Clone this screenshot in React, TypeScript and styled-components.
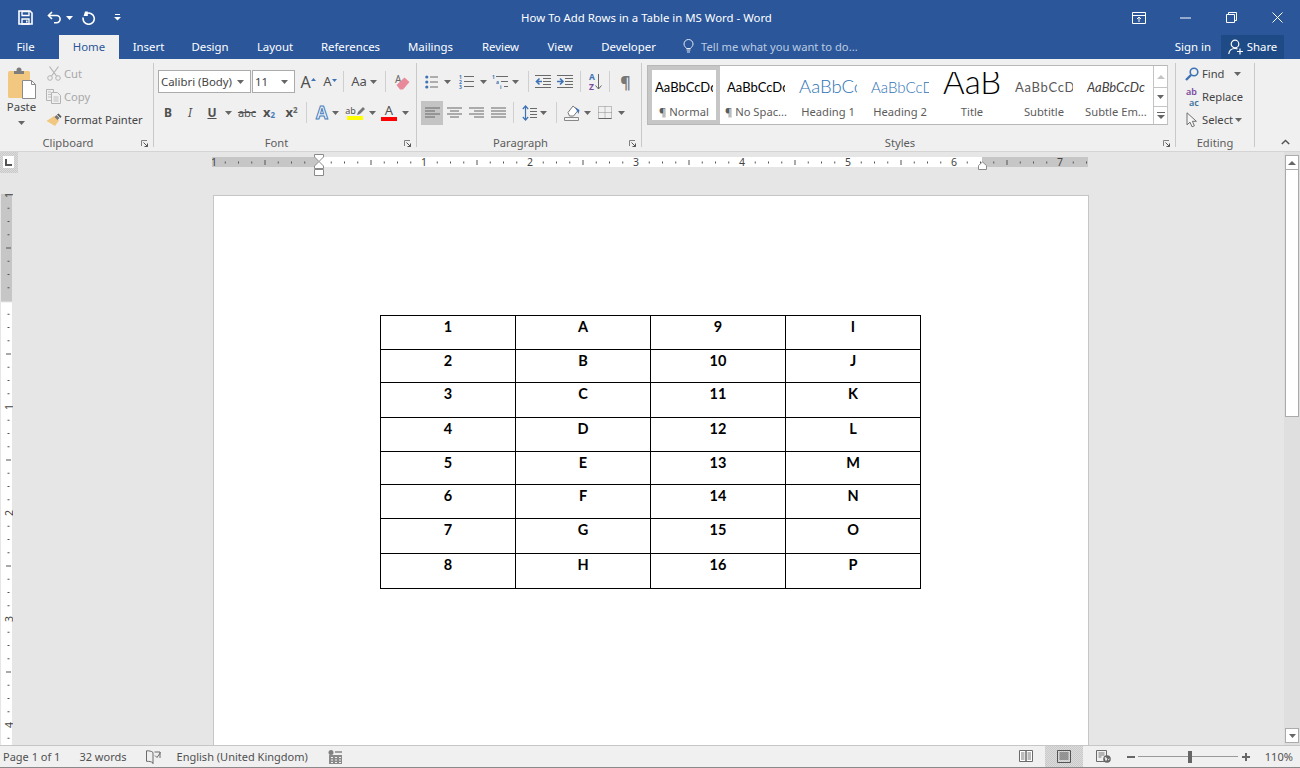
import React from 'react';
import styled, { createGlobalStyle } from 'styled-components';

const UI = '"Noto Sans", "Open Sans", sans-serif';
const BODY = 'Lato, "Liberation Sans", sans-serif';
const BLUE = '#2B579A';
const INK = '#444444';
const DITHER = 'repeating-conic-gradient(#c9c9c9 0 25%, #dcdcdc 0 50%) 0 0 / 2px 2px';

const Global = createGlobalStyle`
  html, body { margin: 0; padding: 0; overflow: hidden; background: #e6e6e6; }
  * { box-sizing: border-box; }
`;

const Window = styled.div`
  width: 1300px;
  height: 768px;
  display: flex;
  flex-direction: column;
  overflow: hidden;
  font-family: ${UI};
  font-size: 11.2px;
  color: ${INK};
`;

/* title bar */
const TitleBar = styled.div`
  height: 35px;
  flex: none;
  background: ${BLUE};
  display: grid;
  grid-template-columns: 178px 1fr 185px;
  align-items: center;
  color: #fff;
`;
const Qat = styled.div`
  display: flex;
  align-items: center;
`;
const DocTitle = styled.div`
  text-align: center;
  font-size: 11.4px;
`;
const WinControls = styled.div`
  display: flex;
`;
const WinBtn = styled.span<{ $w?: number }>`
  width: ${p => p.$w ?? 46}px;
  display: flex;
  align-items: center;
  justify-content: center;
`;

/* tabs */
const TabRow = styled.div`
  height: 24px;
  flex: none;
  background: ${BLUE};
  display: flex;
  align-items: stretch;
  color: #fff;
  font-size: 11.4px;
`;
const Tab = styled.div<{ $w: number; $active?: boolean }>`
  width: ${p => p.$w}px;
  display: flex;
  align-items: center;
  justify-content: center;
  padding-bottom: 2px;
  background: ${p => (p.$active ? '#f0f0f0' : 'transparent')};
  color: ${p => (p.$active ? BLUE : '#fff')};
`;
const TellMe = styled.div`
  margin-left: 13px;
  display: flex;
  align-items: center;
  gap: 7px;
  padding-bottom: 2px;
  color: #bccbe2;
  font-size: 11.2px;
`;
const SignIn = styled.div`
  margin-left: auto;
  display: flex;
  align-items: center;
  margin-right: 10px;
  padding-bottom: 2px;
`;
const ShareBtn = styled.div`
  width: 63px;
  margin-right: 16px;
  padding-bottom: 1px;
  background: #1e4a85;
  display: flex;
  align-items: center;
  justify-content: center;
  gap: 3px;
`;

/* ribbon */
const Ribbon = styled.div`
  height: 93px;
  flex: none;
  background: #f0f0f0;
  border-bottom: 1px solid #d4d4d4;
  display: flex;
  align-items: flex-start;
  padding-top: 4px;
`;
const Group = styled.div<{ $w: number }>`
  width: ${p => p.$w}px;
  height: 84px;
  flex: none;
  display: flex;
  flex-direction: column;
  border-right: 1px solid #c9c9c9;
`;
const GroupBody = styled.div<{ $pt?: number; $row?: boolean }>`
  padding-top: ${p => p.$pt ?? 7}px;
  display: flex;
  flex-direction: ${p => (p.$row ? 'row' : 'column')};
`;
const GroupLabel = styled.div`
  margin-top: auto;
  margin-bottom: -5px;
  height: 20px;
  display: flex;
  align-items: center;
  font-size: 11.2px;
  color: #5c5c5c;
`;
const LabelText = styled.span`
  flex: 1;
  text-align: center;
`;
const Launcher = styled.span`
  display: flex;
  margin: 3px 5px 0;
`;
const ToolRow = styled.div<{ $mt?: number }>`
  display: flex;
  align-items: center;
  height: 23px;
  margin-top: ${p => p.$mt ?? 0}px;
`;
const Tool = styled.span<{ $l?: number; $w?: number; $on?: boolean; $h?: number }>`
  flex: none;
  display: flex;
  align-items: center;
  justify-content: center;
  margin-left: ${p => p.$l ?? 0}px;
  ${p => (p.$w ? `width: ${p.$w}px;` : '')}
  ${p => (p.$h ? `height: ${p.$h}px;` : '')}
  ${p => (p.$on ? 'background: #c4c4c4;' : '')}
`;
const Sep = styled.span<{ $l: number }>`
  flex: none;
  width: 1px;
  height: 21px;
  margin-left: ${p => p.$l}px;
  background: #cfcfcf;
`;
const Combo = styled.div<{ $l: number; $w: number }>`
  margin-left: ${p => p.$l}px;
  width: ${p => p.$w}px;
  height: 23px;
  flex: none;
  background: #fff;
  border: 1px solid #ababab;
  display: flex;
  align-items: center;
  justify-content: space-between;
  padding: 0 6px 0 2px;
  font-size: 11.4px;
`;
const Glyph = styled.span<{ $size?: number; $bold?: boolean; $italic?: boolean; $color?: string }>`
  font-size: ${p => p.$size ?? 12}px;
  font-weight: ${p => (p.$bold ? 700 : 400)};
  font-style: ${p => (p.$italic ? 'italic' : 'normal')};
  color: ${p => p.$color ?? '#505050'};
  line-height: 1;
`;
const Struck = styled(Glyph)`
  text-decoration: line-through;
`;
const Small = styled.span<{ $color?: string }>`
  font-size: 8px;
  font-weight: 700;
  color: ${p => p.$color ?? '#4a7ebb'};
  line-height: 1;
  align-self: ${p => (p.$color ? 'flex-start' : 'flex-end')};
`;
const OutlineA = styled.span`
  font-size: 17px;
  line-height: 1;
  font-weight: 700;
  color: #eaf1fa;
  -webkit-text-stroke: 1px #4a7ebb;
`;
const BarGlyph = styled.span`
  width: 16px;
  display: flex;
  flex-direction: column;
  align-items: center;
`;
const ColorBar = styled.span<{ $color: string }>`
  width: 16px;
  height: 4px;
  background: ${p => p.$color};
  display: block;
`;
const TopMark = styled.span`
  display: flex;
  align-self: flex-start;
  margin-top: 4px;
`;
const PasteCol = styled.div`
  width: 42px;
  flex: none;
  display: flex;
  flex-direction: column;
  align-items: center;
  padding: 4px 0 0 1px;
  font-size: 11.4px;
`;
const PasteLabel = styled.span`
  line-height: 16px;
`;
const Stack = styled.div<{ $l: number }>`
  margin-left: ${p => p.$l}px;
  margin-top: -1px;
`;
const StackIcon = styled.span`
  width: 21px;
  flex: none;
  display: flex;
  align-items: center;
  justify-content: center;
`;
const StackRow = styled.div<{ $off?: boolean }>`
  height: 23px;
  display: flex;
  align-items: center;
  white-space: nowrap;
  color: ${p => (p.$off ? '#a8a8a8' : INK)};
`;
const ReplaceGlyph = styled.span`
  display: flex;
  flex-direction: column;
  align-items: center;
  font-size: 9px;
  font-weight: 600;
  line-height: 11px;
  color: #7a4a9c;
`;
const ReplaceLower = styled.span`
  color: #41719c;
  margin-left: 5px;
`;
const SortGlyph = styled.span`
  display: flex;
  flex-direction: column;
  font-size: 8.5px;
  font-weight: 700;
  line-height: 10px;
  color: #3e74b8;
`;
const SortLower = styled.span`
  color: #7a4a9c;
`;

/* styles gallery */
const Gallery = styled.div`
  margin-left: 5px;
  width: 521px;
  height: 60px;
  background: #fff;
  border: 1px solid #b8b8b8;
  border-right-color: #c4c4c4;
  display: flex;
`;
const StyleItem = styled.div<{ $on?: boolean }>`
  width: 72px;
  flex: none;
  display: flex;
  flex-direction: column;
  align-items: center;
  padding-top: ${p => (p.$on ? 2 : 6)}px;
  border: ${p => (p.$on ? '4px solid #c6c6c6' : 'none')};
`;
const StylePreview = styled.div<{
  $font: number;
  $lh?: number;
  $color?: string;
  $light?: boolean;
  $italic?: boolean;
  $spaced?: boolean;
}>`
  width: 58px;
  height: 24px;
  overflow: hidden;
  white-space: nowrap;
  font-family: ${BODY};
  font-size: ${p => p.$font}px;
  line-height: ${p => p.$lh ?? 30}px;
  font-weight: ${p => (p.$light ? 300 : 400)};
  font-style: ${p => (p.$italic ? 'italic' : 'normal')};
  letter-spacing: ${p => (p.$spaced ? '0.7px' : '0')};
  color: ${p => p.$color ?? '#000'};
`;
const StyleName = styled.div`
  margin-top: 8px;
  line-height: 16px;
  font-size: 11.2px;
  color: #5c5c5c;
  white-space: nowrap;
`;
const GalleryScroll = styled.div`
  margin-left: auto;
  width: 14px;
  display: flex;
  flex-direction: column;
  border-left: 1px solid #c4c4c4;
`;
const ScrollCell = styled.div<{ $h: number; $line?: boolean }>`
  height: ${p => p.$h}px;
  display: flex;
  align-items: center;
  justify-content: center;
  background: ${p => (p.$line ? '#fff' : 'transparent')};
  border-top: ${p => (p.$line ? '1px solid #c4c4c4' : 'none')};
`;
const Collapse = styled.div`
  flex: 1;
  display: flex;
  justify-content: flex-end;
  padding: 76px 10px 0 0;
`;

/* workspace */
const Workspace = styled.div`
  flex: 1;
  min-height: 0;
  display: flex;
  background: #e6e6e6;
`;
const Main = styled.div`
  flex: 1;
  min-width: 0;
  display: flex;
  flex-direction: column;
`;
const RulerRow = styled.div`
  height: 42px;
  flex: none;
  display: flex;
  align-items: flex-start;
`;
const RulerCorner = styled.div`
  width: 18px;
  height: 21px;
  flex: none;
  background: ${DITHER};
  display: flex;
  padding: 4px 4px 5px 3px;
`;
const CornerBox = styled.div`
  flex: 1;
  background: #fff;
  display: flex;
  align-items: center;
  justify-content: center;
`;
const HRulerWrap = styled.div`
  margin: 1px 0 0 194px;
  display: flex;
`;
const DocRow = styled.div`
  flex: 1;
  min-height: 0;
  display: flex;
  overflow: hidden;
`;
const VRulerWrap = styled.div`
  margin-left: 1px;
  width: 12px;
  flex: none;
  display: flex;
`;
const Page = styled.div`
  margin: 1px 0 0 200px;
  width: 876px;
  flex: none;
  background: #fff;
  border: 1px solid #c6c6c6;
  border-bottom: none;
  padding: 119px 0 0 166px;
`;
const DocTable = styled.table`
  border-collapse: collapse;
  table-layout: fixed;
  width: 541px;
  font-family: ${BODY};
  font-weight: 700;
  font-size: 14.5px;
  color: #000;
`;
const TableRow = styled.tr<{ $h: number }>`
  height: ${p => p.$h}px;
`;
const Cell = styled.td`
  border: 1px solid #000;
  width: 135px;
  padding: 2px 0 0;
  text-align: center;
  vertical-align: top;
  line-height: 17px;
`;
const Scrollbar = styled.div`
  width: 16px;
  flex: none;
  background: #dfdfdf;
  display: flex;
  flex-direction: column;
  padding: 3px 1px 2px 1px;
`;
const ScrollBtn = styled.div`
  height: 15px;
  flex: none;
  background: #fff;
  border: 1px solid #ababab;
  display: flex;
  align-items: center;
  justify-content: center;
`;
const ScrollThumb = styled.div`
  height: 247px;
  flex: none;
  background: #fff;
  border: 1px solid #ababab;
  border-top: none;
  margin-bottom: auto;
`;

/* status bar */
const StatusBar = styled.div`
  height: 23px;
  flex: none;
  background: #f0f0f0;
  border-top: 1px solid #c6c6c6;
  border-bottom: 1px solid #8a8a8a;
  display: flex;
  align-items: center;
  font-size: 11px;
  color: #505050;
`;
const StatusItem = styled.span<{ $l: number }>`
  margin-left: ${p => p.$l}px;
  flex: none;
  display: flex;
  align-items: center;
  white-space: nowrap;
`;
const ViewCell = styled.span`
  margin-left: 12px;
  width: 38px;
  height: 21px;
  flex: none;
  background: ${DITHER};
  display: flex;
  align-items: center;
  justify-content: center;
`;
const ZoomTrack = styled.div`
  margin-left: 3px;
  width: 100px;
  height: 1px;
  flex: none;
  background: #9a9a9a;
  display: flex;
  align-items: center;
  justify-content: center;
`;
const ZoomThumb = styled.span`
  width: 4px;
  height: 12px;
  flex: none;
  margin-left: 4px;
  background: #666;
`;

/* icons */
type IcoProps = { w: number; h: number; children?: React.ReactNode };
const Ico = ({ w, h, children }: IcoProps) => (
  <svg width={w} height={h} viewBox={`0 0 ${w} ${h}`} fill="none">
    {children}
  </svg>
);

const Caret = ({ color = '#666' }: { color?: string }) => (
  <Ico w={7} h={4}>
    <path d="M0 0h7L3.5 4z" fill={color} />
  </Ico>
);

const SaveIcon = () => (
  <Ico w={15} h={15}>
    <path d="M1 1h11l2 2v11H1z" stroke="#fff" strokeWidth="1.6" />
    <path d="M4 1.5h7v4H4zM4 9h7v5H4z" stroke="#fff" strokeWidth="1.3" />
    <path d="M8 10.5h1.5v2H8z" fill="#fff" />
  </Ico>
);
const UndoIcon = () => (
  <Ico w={15} h={13}>
    <path d="M5 1L1.500 4.500 5 8" stroke="#fff" strokeWidth="1.600" />
    <path d="M2 4.500h7.500a3.600 3.600 0 0 1 0 7.200H7" stroke="#fff" strokeWidth="1.600" />
  </Ico>
);
const RedoIcon = () => (
  <Ico w={14} h={14}>
    <path d="M4.500 2.500A5.600 5.600 0 1 1 1.200 6.500" stroke="#fff" strokeWidth="1.600" />
    <path d="M3 .5h2.800v4.600H1.600z" fill="#fff" />
  </Ico>
);
const QatIcon = () => (
  <Ico w={7} h={7}>
    <path d="M1 .5h5" stroke="#fff" />
    <path d="M0 3h7L3.500 6.500z" fill="#fff" />
  </Ico>
);
const DisplayIcon = () => (
  <Ico w={14} h={12}>
    <path d="M.5.5h13v11H.5zM.5 3.500h13" stroke="#fff" />
    <path d="M7 10V5M5 7l2-2 2 2" stroke="#fff" />
  </Ico>
);
const MinIcon = () => (
  <Ico w={11} h={2}>
    <path d="M0 1h11" stroke="#fff" />
  </Ico>
);
const RestoreIcon = () => (
  <Ico w={11} h={11}>
    <path d="M.5 2.500h8v8h-8zM2.500 2.500v-2h8v8h-2" stroke="#fff" />
  </Ico>
);
const CloseIcon = () => (
  <Ico w={11} h={11}>
    <path d="M.5.5l10 10M10.500.5l-10 10" stroke="#fff" />
  </Ico>
);
const BulbIcon = () => (
  <Ico w={11} h={14}>
    <path d="M3.500 9.500C2.500 8 1 7.200 1 5a4.500 4.500 0 0 1 9 0c0 2.200-1.500 3-2.500 4.500z" stroke="#e4eaf4" />
    <path d="M3.500 11h4M4 13h3" stroke="#e4eaf4" />
  </Ico>
);
const PersonIcon = () => (
  <Ico w={16} h={16}>
    <circle cx="7" cy="5" r="3.800" stroke="#fff" strokeWidth="1.200" />
    <path d="M.8 15c.3-3.500 2.500-5.500 6.200-5.500 1 0 1.800.1 2.500.4" stroke="#fff" strokeWidth="1.200" />
    <path d="M12 9.500v6M9 12.500h6" stroke="#fff" strokeWidth="1.200" />
  </Ico>
);
const PasteIcon = () => (
  <Ico w={30} h={32}>
    <rect x="1" y="4" width="22" height="27" rx="1.500" fill="#f2c77f" />
    <path d="M7 4h10v3H7z" fill="#7d7d7d" />
    <circle cx="12" cy="3" r="2.500" fill="#7d7d7d" />
    <path d="M15.500 13.500h9l4 4v14h-13z" fill="#fff" stroke="#8a8a8a" />
    <path d="M24.500 13.500v4h4" stroke="#8a8a8a" />
  </Ico>
);
const CutIcon = () => (
  <Ico w={14} h={15}>
    <path d="M2.500 .5l7 9.500M11.500.5l-7 9.500" stroke="#b4b4b4" strokeWidth="1.200" />
    <circle cx="3" cy="12" r="2.300" stroke="#b4b4b4" />
    <circle cx="11" cy="12" r="2.300" stroke="#b4b4b4" />
  </Ico>
);
const CopyIcon = () => (
  <Ico w={15} h={15}>
    <path d="M.5.5h7v11h-7z" fill="#f0f0f0" stroke="#b4b4b4" />
    <path d="M5.500 3.500h6l3 3v8h-9z" fill="#f0f0f0" stroke="#b4b4b4" />
    <path d="M2 3h3M2 5.500h3M2 8h3M7.500 8h5M7.500 10h5M7.500 12h5" stroke="#c0c0c0" />
  </Ico>
);
const PainterIcon = () => (
  <Ico w={16} h={14}>
    <path d="M8 3l5 4.500-4 5.500L.5 8z" fill="#f2c77f" />
    <path d="M8.500 4l2-2 3 3-2 2z" fill="#777" />
    <path d="M11 1.500l1.500-1 3 3-1 1.500z" fill="#555" />
  </Ico>
);
const LauncherIcon = () => (
  <Ico w={7} h={7}>
    <path d="M.5 6V.5H6" stroke="#808080" />
    <path d="M2.500 2.500l4 4M6.500 3.500v3h-3" stroke="#555" />
  </Ico>
);
const EraserIcon = () => (
  <Ico w={16} h={17}>
    <text x="1" y="10" fontSize="10" fill="#666" fontFamily={UI}>A</text>
    <path d="M2.500 12l8-7.500 5 4.500-6.500 7.500H6z" fill="#e98a9a" />
  </Ico>
);
const PenIcon = () => (
  <Ico w={9} h={10}>
    <path d="M1 9l1-3 5-5 2 2-5 5z" fill="#777" />
  </Ico>
);

const BulletIcon = () => (
  <Ico w={13} h={14}>
    {[2, 7, 12].map(y => (
      <React.Fragment key={y}>
        <circle cx="1.800" cy={y} r="1.600" fill="#3f73b5" />
        <path d={`M5 ${y}H13`} stroke="#6a6a6a" />
      </React.Fragment>
    ))}
  </Ico>
);
const NumberIcon = () => (
  <Ico w={15} h={15}>
    {[1, 2, 3].map(n => (
      <React.Fragment key={n}>
        <text x="0" y={n * 5 - 0.5} fontSize="5" fontWeight="700" fill="#3f73b5" fontFamily={UI}>{n}</text>
        <path d={`M5 ${n * 5 - 2.500}H15`} stroke="#6a6a6a" />
      </React.Fragment>
    ))}
  </Ico>
);
const MultiIcon = () => (
  <Ico w={17} h={15}>
    <text x="0" y="5" fontSize="5" fontWeight="700" fill="#3f73b5" fontFamily={UI}>1</text>
    <text x="4" y="10" fontSize="5" fontWeight="700" fill="#3f73b5" fontFamily={UI}>a</text>
    <text x="8" y="15" fontSize="5" fontWeight="700" fill="#3f73b5" fontFamily={UI}>i</text>
    <path d="M4 2.500H16M9 7.500h7M12 12.500h4" stroke="#6a6a6a" />
  </Ico>
);
const IndentIcon = ({ out }: { out?: boolean }) => (
  <Ico w={16} h={13}>
    <path d="M0 .5h16M8 3.500h8M8 6.500h8M8 9.500h8M0 12.500h16" stroke="#6a6a6a" />
    {out ? (
      <path d="M7 6.500H2M4.500 3.500l-3 3 3 3" stroke="#3f73b5" strokeWidth="1.600" />
    ) : (
      <path d="M0 6.500h5M3 3.500l3 3-3 3" stroke="#3f73b5" strokeWidth="1.600" />
    )}
  </Ico>
);
const SortArrow = () => (
  <Ico w={7} h={16}>
    <path d="M3.500 0v15M.5 11.500l3 3.500 3-3.500" stroke="#666" />
  </Ico>
);
const AlignIcon = ({ rows }: { rows: [number, number][] }) => (
  <Ico w={15} h={11}>
    {rows.map(([a, b], i) => (
      <path key={i} d={`M${a} ${i * 3 + 1}H${b}`} stroke="#666" strokeWidth="1" />
    ))}
  </Ico>
);
const SpacingIcon = () => (
  <Ico w={15} h={16}>
    <path d="M3.500 1v14M.8 4l2.700-3 2.700 3M.8 12l2.700 3 2.700-3" stroke="#3f73b5" strokeWidth="1.200" />
    <path d="M8 3.500h7M8 6.500h7M8 9.500h7M8 12.500h7" stroke="#6a6a6a" />
  </Ico>
);
const ShadingIcon = () => (
  <Ico w={17} h={16}>
    <path d="M4 7.500l5-6.500 5 4.500-4.500 5.500H5.500z" fill="#fff" stroke="#777" />
    <path d="M11 2l4.500 3-1 4z" fill="#3f73b5" />
    <path d="M.5 12.500h14v3H.5z" fill="#f4f4f4" stroke="#888" />
  </Ico>
);
const BordersIcon = () => (
  <Ico w={14} h={13}>
    <path d="M.5.5h13v12H.5zM7 .5v12M.5 6.500h13" stroke="#8a8a8a" strokeDasharray="1 1" />
    <path d="M.5 12.500h13" stroke="#666" />
  </Ico>
);
const FindIcon = () => (
  <Ico w={14} h={14}>
    <circle cx="9" cy="5" r="3.800" stroke="#3f73b5" strokeWidth="1.600" />
    <path d="M6 8L1 13" stroke="#3f73b5" strokeWidth="2.400" />
  </Ico>
);
const SelectIcon = () => (
  <Ico w={12} h={16}>
    <path d="M1 .8v12l3-2.600 2 4.600 2.400-1-2-4.500h4z" fill="#f4f4f4" stroke="#707070" />
  </Ico>
);
const ChevronUp = () => (
  <Ico w={9} h={6}>
    <path d="M.8 5l3.700-3.500L8.200 5" stroke="#555" strokeWidth="1.500" />
  </Ico>
);
const ArrowUp = ({ color = '#666' }: { color?: string }) => (
  <Ico w={8} h={4}>
    <path d="M0 4h8L4 0z" fill={color} />
  </Ico>
);
const LineCaret = () => (
  <Ico w={8} h={7}>
    <path d="M0 .5h8" stroke="#666" />
    <path d="M0 3h8L4 7z" fill="#666" />
  </Ico>
);
const TabStopIcon = () => (
  <Ico w={7} h={7}>
    <path d="M1 0v6h6" stroke="#555" strokeWidth="2" />
  </Ico>
);
const ProofIcon = () => (
  <Ico w={15} h={14}>
    <path d="M7 2.500C5.500 1 3 .8.500.8v10.500c2.500 0 5 .2 6.500 1.700M7 2.500v12" stroke="#6a6a6a" />
    <path d="M8.500 2h5.500v6" stroke="#6a6a6a" />
    <path d="M9 5.500l2 2 3.500-5" stroke="#6a6a6a" />
  </Ico>
);
const MacroIcon = () => (
  <Ico w={14} h={14}>
    <circle cx="3" cy="2.500" r="2.500" fill="#808080" />
    <path d="M7 1h7v2H7z" fill="#a0a0a0" />
    <path d="M1 5h13v9H1z" fill="#8a8a8a" />
    <path d="M3 7.500h2M7 7.500h2M11 7.500h2M3 10h2M7 10h2M11 10h2M3 12.500h2M7 12.500h2M11 12.500h2" stroke="#f0f0f0" />
  </Ico>
);
const ReadIcon = () => (
  <Ico w={14} h={13}>
    <path d="M.5.5h6.500v11H.5zM7 .5h6.500v11H7z" fill="#fff" stroke="#6a6a6a" />
    <path d="M2 3h3.500M2 5h3.500M2 7h3.500M2 9h3.500M8.500 3H12M8.500 5H12M8.500 7H12M8.500 9H12" stroke="#777" />
  </Ico>
);
const PrintIcon = () => (
  <Ico w={14} h={13}>
    <path d="M.5.5h13v12H.5z" stroke="#555" />
    <path d="M2.500 3h9M2.500 5h9M2.500 7h9M2.500 9h9" stroke="#555" />
  </Ico>
);
const WebIcon = () => (
  <Ico w={15} h={13}>
    <path d="M.5.5h10v11H.5z" fill="#f0f0f0" stroke="#6a6a6a" />
    <path d="M2.500 3h6M2.500 5h6M2.500 7h3" stroke="#777" />
    <circle cx="11" cy="9" r="3.800" fill="#666" />
    <path d="M9 7.500l2 1-1 2zM12 10l1.500-1" stroke="#f0f0f0" />
  </Ico>
);
const ZoomSign = ({ plus }: { plus?: boolean }) => (
  <Ico w={8} h={8}>
    <path d="M0 4h8" stroke="#666" strokeWidth="2" />
    {plus && <path d="M4 0v8" stroke="#666" strokeWidth="2" />}
  </Ico>
);

const HRuler = () => {
  const ticks: React.ReactNode[] = [];
  for (let k = -7; k <= 58; k++) {
    if (k === 0 || k % 8 === 0) continue;
    const x = 106 + k * 13.25;
    const tall = k % 4 === 0;
    ticks.push(<path key={k} d={`M${x} ${tall ? 7 : 8.5}v${tall ? 5 : 2}`} stroke="#555" />);
  }
  return (
    <svg width={882} height={25} viewBox="0 0 882 25" fill="none">
      <rect x="0" y="4" width="876" height="10" fill="#fff" />
      <rect x="0" y="4" width="106" height="10" fill="#c6c6c6" />
      <rect x="770" y="4" width="106" height="10" fill="#c6c6c6" />
      {ticks}
      {[-1, 1, 2, 3, 4, 5, 6, 7].map(n => (
        <text key={n} x={n === -1 ? 2 : 106 + n * 106} y="13" fontSize="10.500" fill="#444" textAnchor="middle" fontFamily={UI}>
          {Math.abs(n)}
        </text>
      ))}
      <path d="M102.500 1.500h9v2.500l-4.500 4.500 4.500 4.500v2.500h-9v-2.500l4.500-4.500-4.500-4.500z" fill="#fff" stroke="#8a8a8a" />
      <path d="M102.500 16.500h9v6h-9z" fill="#fff" stroke="#8a8a8a" />
      <path d="M766.500 16.500v-4l4-3.500 4 3.500v4z" fill="#fff" stroke="#8a8a8a" />
    </svg>
  );
};

const VRuler = () => {
  const ticks: React.ReactNode[] = [];
  for (let k = -7; k <= 40; k++) {
    if (k === 0 || k % 8 === 0) continue;
    const y = 107 + k * 13.25;
    const tall = k % 4 === 0;
    ticks.push(<path key={k} d={`M${tall ? 5 : 6.500} ${y}h${tall ? 5 : 2}`} stroke="#555" />);
  }
  return (
    <svg width={12} height={560} viewBox="0 0 12 560" fill="none">
      <rect x="0" y="0" width="11" height="107.500" fill="#c6c6c6" />
      <rect x="0" y="108.500" width="11" height="452" fill="#fff" />
      {ticks}
      {[-1, 1, 2, 3, 4, 5].map(n => (
        <text
          key={n}
          x={0}
          y={0}
          transform={`translate(11.500 ${107 + n * 106}) rotate(-90)`}
          fontSize="10.500"
          fill="#444"
          textAnchor="middle"
          fontFamily={UI}
        >
          {Math.abs(n)}
        </text>
      ))}
    </svg>
  );
};

const TABS: [string, number][] = [
  ['Insert', 59],
  ['Design', 64],
  ['Layout', 66],
  ['References', 85],
  ['Mailings', 75],
  ['Review', 65],
  ['View', 54],
  ['Developer', 83],
];

type StyleDef = {
  name: string;
  text: string;
  font: number;
  lh?: number;
  color?: string;
  on?: boolean;
  light?: boolean;
  italic?: boolean;
  spaced?: boolean;
};

const STYLES: StyleDef[] = [
  { name: '¶ Normal', text: 'AaBbCcDc', font: 13, on: true },
  { name: '¶ No Spac...', text: 'AaBbCcDc', font: 13 },
  { name: 'Heading 1', text: 'AaBbCc', font: 18.5, lh: 28, color: '#2e74b5', light: true },
  { name: 'Heading 2', text: 'AaBbCcD', font: 15, color: '#2e74b5', light: true },
  { name: 'Title', text: 'AaB', font: 33, lh: 18, light: true },
  { name: 'Subtitle', text: 'AaBbCcD', font: 13, color: '#595959', spaced: true },
  { name: 'Subtle Em...', text: 'AaBbCcDc', font: 13, color: '#404040', italic: true },
];

const ROWS: { h: number; cells: string[] }[] = [
  { h: 34, cells: ['1', 'A', '9', 'I'] },
  { h: 33, cells: ['2', 'B', '10', 'J'] },
  { h: 35, cells: ['3', 'C', '11', 'K'] },
  { h: 34, cells: ['4', 'D', '12', 'L'] },
  { h: 33, cells: ['5', 'E', '13', 'M'] },
  { h: 34, cells: ['6', 'F', '14', 'N'] },
  { h: 35, cells: ['7', 'G', '15', 'O'] },
  { h: 35, cells: ['8', 'H', '16', 'P'] },
];

export default function App() {
  return (
    <Window>
      <Global />
      <TitleBar>
        <Qat>
          <Tool $l={18}><SaveIcon /></Tool>
          <Tool $l={14}><UndoIcon /></Tool>
          <Tool $l={4}><Caret color="#fff" /></Tool>
          <Tool $l={9}><RedoIcon /></Tool>
          <Tool $l={18}><QatIcon /></Tool>
        </Qat>
        <DocTitle>How To Add Rows in a Table in MS Word - Word</DocTitle>
        <WinControls>
          <WinBtn $w={47}><DisplayIcon /></WinBtn>
          <WinBtn><MinIcon /></WinBtn>
          <WinBtn><RestoreIcon /></WinBtn>
          <WinBtn><CloseIcon /></WinBtn>
        </WinControls>
      </TitleBar>

      <TabRow>
        <Tab $w={51}>File</Tab>
        <Tab $w={8} />
        <Tab $w={60} $active>Home</Tab>
        {TABS.map(([name, w]) => (
          <Tab key={name} $w={w}>{name}</Tab>
        ))}
        <TellMe>
          <BulbIcon />
          Tell me what you want to do...
        </TellMe>
        <SignIn>Sign in</SignIn>
        <ShareBtn>
          <PersonIcon />
          Share
        </ShareBtn>
      </TabRow>

      <Ribbon>
        <Group $w={154}>
          <GroupBody $pt={0} $row>
            <PasteCol>
              <PasteIcon />
              <PasteLabel>Paste</PasteLabel>
              <Tool $h={16}><Caret /></Tool>
            </PasteCol>
            <Stack $l={1}>
              <StackRow $off><StackIcon><CutIcon /></StackIcon>Cut</StackRow>
              <StackRow $off><StackIcon><CopyIcon /></StackIcon>Copy</StackRow>
              <StackRow><StackIcon><PainterIcon /></StackIcon>Format Painter</StackRow>
            </Stack>
          </GroupBody>
          <GroupLabel>
            <LabelText>Clipboard</LabelText>
            <Launcher><LauncherIcon /></Launcher>
          </GroupLabel>
        </Group>

        <Group $w={263}>
          <GroupBody>
            <ToolRow>
              <Combo $l={4} $w={93}>Calibri (Body)<Caret /></Combo>
              <Combo $l={1} $w={43}>11<Caret /></Combo>
              <Tool $l={6} $w={14}>
                <Glyph $size={16}>A</Glyph>
                <TopMark><Ico w={5} h={3}><path d="M0 3h5L2.500 0z" fill="#3f73b5" /></Ico></TopMark>
              </Tool>
              <Tool $l={9} $w={12}>
                <Glyph $size={13}>A</Glyph>
                <TopMark><Ico w={5} h={3}><path d="M0 0h5L2.500 3z" fill="#3f73b5" /></Ico></TopMark>
              </Tool>
              <Sep $l={7} />
              <Tool $l={7} $w={16}><Glyph $size={13}>Aa</Glyph></Tool>
              <Tool $l={3}><Caret /></Tool>
              <Sep $l={8} />
              <Tool $l={8}><EraserIcon /></Tool>
            </ToolRow>
            <ToolRow $mt={8}>
              <Tool $l={10} $w={8}><Glyph $bold>B</Glyph></Tool>
              <Tool $l={14} $w={8}><Glyph $italic>I</Glyph></Tool>
              <Tool $l={13} $w={10}><Glyph $bold as="u">U</Glyph></Tool>
              <Tool $l={8}><Caret /></Tool>
              <Tool $l={7} $w={16}><Struck $size={11}>abc</Struck></Tool>
              <Tool $l={7} $w={14}><Glyph $bold $size={13}>x</Glyph><Small>2</Small></Tool>
              <Tool $l={9} $w={13}><Glyph $bold $size={13}>x</Glyph><Small $color="#666">2</Small></Tool>
              <Sep $l={8} />
              <Tool $l={8} $w={14}><OutlineA>A</OutlineA></Tool>
              <Tool $l={3}><Caret /></Tool>
              <Tool $l={8} $w={16}>
                <BarGlyph>
                  <Tool>
                    <Glyph $size={9}>ab</Glyph>
                    <PenIcon />
                  </Tool>
                  <ColorBar $color="#ffff00" />
                </BarGlyph>
              </Tool>
              <Tool $l={6}><Caret /></Tool>
              <Tool $l={5} $w={16}>
                <BarGlyph>
                  <Glyph $size={13}>A</Glyph>
                  <ColorBar $color="#ff0000" />
                </BarGlyph>
              </Tool>
              <Tool $l={5}><Caret /></Tool>
            </ToolRow>
          </GroupBody>
          <GroupLabel>
            <LabelText>Font</LabelText>
            <Launcher><LauncherIcon /></Launcher>
          </GroupLabel>
        </Group>

        <Group $w={225}>
          <GroupBody>
            <ToolRow>
              <Tool $l={8}><BulletIcon /></Tool>
              <Tool $l={6}><Caret /></Tool>
              <Tool $l={8}><NumberIcon /></Tool>
              <Tool $l={6}><Caret /></Tool>
              <Tool $l={5}><MultiIcon /></Tool>
              <Tool $l={3}><Caret /></Tool>
              <Sep $l={9} />
              <Tool $l={6}><IndentIcon out /></Tool>
              <Tool $l={6}><IndentIcon /></Tool>
              <Sep $l={7} />
              <Tool $l={8}>
                <SortGlyph>A<SortLower>Z</SortLower></SortGlyph>
                <SortArrow />
              </Tool>
              <Sep $l={7} />
              <Tool $l={10} $w={11}><Glyph $size={16} $bold $color="#777">¶</Glyph></Tool>
            </ToolRow>
            <ToolRow $mt={8}>
              <Tool $l={4} $w={22} $h={24} $on><AlignIcon rows={[[0, 15], [0, 10], [0, 15], [0, 10]]} /></Tool>
              <Tool $w={22}><AlignIcon rows={[[0, 15], [3, 12], [0, 15], [3, 12]]} /></Tool>
              <Tool $w={22}><AlignIcon rows={[[0, 15], [5, 15], [0, 15], [5, 15]]} /></Tool>
              <Tool $w={22}><AlignIcon rows={[[0, 15], [0, 15], [0, 15], [0, 15]]} /></Tool>
              <Sep $l={4} />
              <Tool $l={8}><SpacingIcon /></Tool>
              <Tool $l={3}><Caret /></Tool>
              <Sep $l={9} />
              <Tool $l={7}><ShadingIcon /></Tool>
              <Tool $l={3}><Caret /></Tool>
              <Tool $l={7}><BordersIcon /></Tool>
              <Tool $l={6}><Caret /></Tool>
            </ToolRow>
          </GroupBody>
          <GroupLabel>
            <LabelText>Paragraph</LabelText>
            <Launcher><LauncherIcon /></Launcher>
          </GroupLabel>
        </Group>

        <Group $w={534}>
          <GroupBody $pt={2}>
            <Gallery>
              {STYLES.map(s => (
                <StyleItem key={s.name} $on={s.on}>
                  <StylePreview
                    $font={s.font}
                    $lh={s.lh}
                    $color={s.color}
                    $light={s.light}
                    $italic={s.italic}
                    $spaced={s.spaced}
                  >
                    {s.text}
                  </StylePreview>
                  <StyleName>{s.name}</StyleName>
                </StyleItem>
              ))}
              <GalleryScroll>
                <ScrollCell $h={21}><ArrowUp color="#c4c4c4" /></ScrollCell>
                <ScrollCell $h={19} $line><Caret /></ScrollCell>
                <ScrollCell $h={18} $line><LineCaret /></ScrollCell>
              </GalleryScroll>
            </Gallery>
          </GroupBody>
          <GroupLabel>
            <LabelText>Styles</LabelText>
            <Launcher><LauncherIcon /></Launcher>
          </GroupLabel>
        </Group>

        <Group $w={79}>
          <GroupBody $pt={0}>
            <Stack $l={5}>
              <StackRow><StackIcon><FindIcon /></StackIcon>Find<Tool $l={9}><Caret /></Tool></StackRow>
              <StackRow>
                <StackIcon><ReplaceGlyph>ab<ReplaceLower>ac</ReplaceLower></ReplaceGlyph></StackIcon>
                Replace
              </StackRow>
              <StackRow><StackIcon><SelectIcon /></StackIcon>Select<Tool $l={2}><Caret /></Tool></StackRow>
            </Stack>
          </GroupBody>
          <GroupLabel>
            <LabelText>Editing</LabelText>
          </GroupLabel>
        </Group>

        <Collapse><ChevronUp /></Collapse>
      </Ribbon>

      <Workspace>
        <Main>
          <RulerRow>
            <RulerCorner>
              <CornerBox><TabStopIcon /></CornerBox>
            </RulerCorner>
            <HRulerWrap><HRuler /></HRulerWrap>
          </RulerRow>
          <DocRow>
            <VRulerWrap><VRuler /></VRulerWrap>
            <Page>
              <DocTable>
                <tbody>
                  {ROWS.map(r => (
                    <TableRow key={r.cells[0]} $h={r.h}>
                      {r.cells.map(c => (
                        <Cell key={c}>{c}</Cell>
                      ))}
                    </TableRow>
                  ))}
                </tbody>
              </DocTable>
            </Page>
          </DocRow>
        </Main>
        <Scrollbar>
          <ScrollBtn><ArrowUp /></ScrollBtn>
          <ScrollThumb />
          <ScrollBtn><Caret /></ScrollBtn>
        </Scrollbar>
      </Workspace>

      <StatusBar>
        <StatusItem $l={3}>Page 1 of 1</StatusItem>
        <StatusItem $l={19}>32 words</StatusItem>
        <StatusItem $l={19}><ProofIcon /></StatusItem>
        <StatusItem $l={16}>English (United Kingdom)</StatusItem>
        <StatusItem $l={20}><MacroIcon /></StatusItem>
        <StatusItem $l={677}><ReadIcon /></StatusItem>
        <ViewCell><PrintIcon /></ViewCell>
        <StatusItem $l={13}><WebIcon /></StatusItem>
        <StatusItem $l={16}><ZoomSign /></StatusItem>
        <ZoomTrack><ZoomThumb /></ZoomTrack>
        <StatusItem $l={4}><ZoomSign plus /></StatusItem>
        <StatusItem $l={15}>110%</StatusItem>
      </StatusBar>
    </Window>
  );
}
